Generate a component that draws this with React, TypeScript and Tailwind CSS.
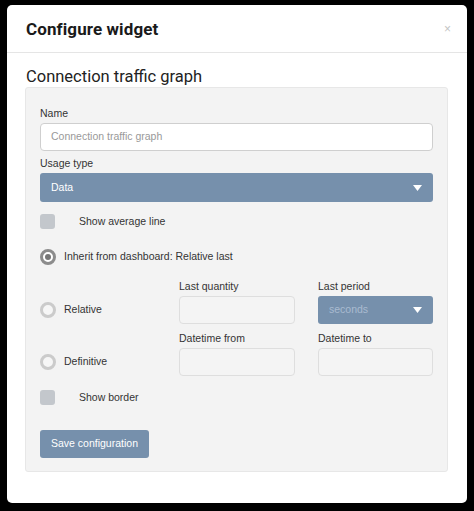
import type { ReactNode } from 'react'

const body = "font-['Liberation_Sans',Arial,sans-serif] text-[10.5px] text-[#333]"

function Label({ children }: { children: ReactNode }) {
  return <div className="mb-[2px] h-4 leading-4">{children}</div>
}

function TextBox({ placeholder }: { placeholder?: string }) {
  return (
    <div className="flex h-[28px] items-center rounded-[4px] border border-[#cfcfcf] bg-white px-[10px] text-[#999]">
      {placeholder}
    </div>
  )
}

function EmptyBox() {
  return <div className="h-[28px] rounded-[4px] border border-[#dedede] bg-[#f4f4f4]" />
}

function Caret() {
  return (
    <svg width="9" height="6" viewBox="0 0 9 6" aria-hidden>
      <path d="M0 0h9L4.5 6z" fill="#fff" />
    </svg>
  )
}

function Checkbox({ label }: { label: string }) {
  return (
    <div className="flex h-[15px] items-center">
      <span className="h-[15px] w-[15px] rounded-[3px] bg-[#c3c7cc]" />
      <span className="ml-[24px]">{label}</span>
    </div>
  )
}

function Radio({ checked }: { checked?: boolean }) {
  return checked ? (
    <span className="flex h-[16px] w-[16px] items-center justify-center rounded-full border-[3px] border-[#8c8c8c] bg-white">
      <span className="h-[6px] w-[6px] rounded-full bg-[#777]" />
    </span>
  ) : (
    <span className="h-[16px] w-[16px] rounded-full border-[3px] border-[#cbcbcb] bg-[#f6f6f6]" />
  )
}

export default function App() {
  return (
    <div className="min-h-[511px] w-[474px] bg-black pt-[5px]">
      <div className="mx-[7px] h-[498px] rounded-[5px] bg-white">
        <div className="flex h-[48px] items-center justify-between border-b border-[#e5e5e5] pl-[19px] pr-[16px]">
          <h1 className="mt-[3px] font-['Roboto',sans-serif] text-[17px] font-bold tracking-[0.1px] text-[#1a1a1a]">
            Configure widget
          </h1>
          <span className="font-['Liberation_Sans',sans-serif] text-[12px] text-[#c4c4c4]">×</span>
        </div>

        <div className="pl-[18px] pr-[19px]">
          <h2 className="mt-[13px] h-[21px] pl-[1px] font-['Roboto',sans-serif] text-[16.5px] leading-[21px] text-[#222]">
            Connection traffic graph
          </h2>

          <div className={`${body} rounded-[3px] border border-[#e7e7e7] bg-[#f3f3f3] px-[14px] pb-[13px] pt-[17px]`}>
            <Label>Name</Label>
            <TextBox placeholder="Connection traffic graph" />

            <div className="mt-[4px]">
              <Label>Usage type</Label>
            </div>
            <div className="flex h-[29px] items-center justify-between rounded-[3px] bg-[#7690ac] pl-[11px] pr-[11px] text-white">
              <span>Data</span>
              <Caret />
            </div>

            <div className="mt-[12px]">
              <Checkbox label="Show average line" />
            </div>

            <div className="mt-[20px] flex h-[16px] items-center gap-[8px]">
              <Radio checked />
              <span>Inherit from dashboard: Relative last</span>
            </div>

            <div className="mt-[13px] flex items-end">
              <div className="flex h-[28px] w-[139px] items-center gap-[8px]">
                <Radio />
                <span>Relative</span>
              </div>
              <div className="w-[116px]">
                <Label>Last quantity</Label>
                <EmptyBox />
              </div>
              <div className="ml-[23px] w-[115px]">
                <Label>Last period</Label>
                <div className="flex h-[28px] items-center justify-between rounded-[3px] bg-[#7690ac] pl-[11px] pr-[11px] text-[#a9bbd0]">
                  <span>seconds</span>
                  <Caret />
                </div>
              </div>
            </div>

            <div className="mt-[6px] flex items-end">
              <div className="flex h-[28px] w-[139px] items-center gap-[8px]">
                <Radio />
                <span>Definitive</span>
              </div>
              <div className="w-[116px]">
                <Label>Datetime from</Label>
                <EmptyBox />
              </div>
              <div className="ml-[23px] w-[115px]">
                <Label>Datetime to</Label>
                <EmptyBox />
              </div>
            </div>

            <div className="mt-[14px]">
              <Checkbox label="Show border" />
            </div>

            <button
              type="button"
              className="mt-[25px] flex h-[28px] w-[109px] items-center justify-center rounded-[3px] bg-[#7690ac] text-white"
            >
              Save configuration
            </button>
          </div>
        </div>
      </div>
    </div>
  )
}
